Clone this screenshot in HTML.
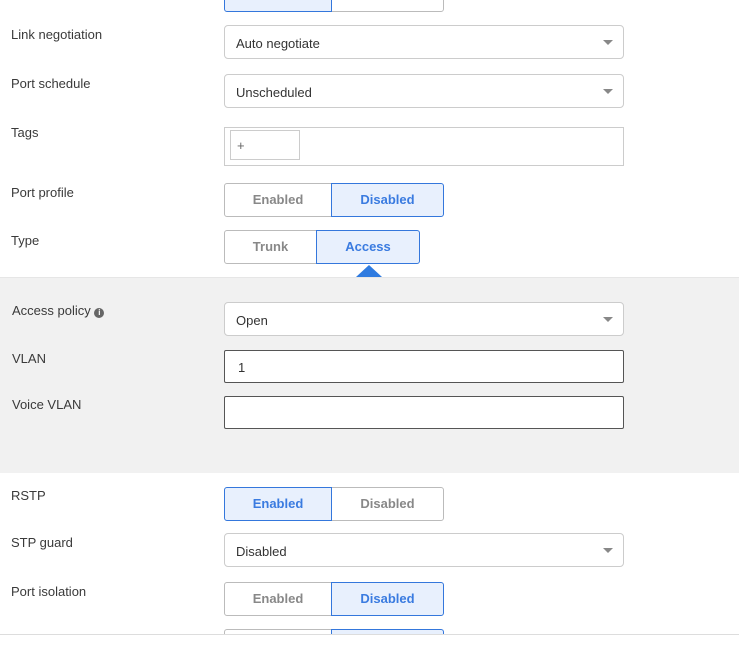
<!DOCTYPE html>
<html><head><style>
*{box-sizing:border-box;margin:0;padding:0}
html,body{width:739px;height:657px;overflow:hidden}
body{position:relative;background:#fff;font-family:"Liberation Sans",sans-serif;font-size:13px;color:#333}
.a{position:absolute}
.lbl{position:absolute;left:11px;font-size:13px;color:#3a3a3a}
.sel{position:absolute;left:224px;width:400px;height:34px;border:1px solid #ccc;border-radius:4px;background:#fff;padding:10px 0 0 11px;color:#333}
.sel:after{content:"";position:absolute;right:10px;top:14px;border-left:5px solid transparent;border-right:5px solid transparent;border-top:5px solid #888}
.inp{position:absolute;left:224px;width:400px;height:33px;border:1px solid #555;border-radius:2px;background:#fff;padding:9px 0 0 13px}
.btn{position:absolute;height:34px;border:1px solid #bbb;background:#fff;color:#888;font-weight:bold;text-align:center;line-height:32px;font-size:13px}
.on{background:#e8f0fd;border-color:#3477dc;color:#3a7be0;z-index:2}
.l{border-radius:3px 0 0 3px}.r{border-radius:0 3px 3px 0}
</style></head><body>
<div class="btn on l" style="left:224px;top:-22px;width:108px;"></div>
<div class="btn r" style="left:331px;top:-22px;width:113px;"></div>

<div class="lbl" style="top:27px">Link negotiation</div>
<div class="sel" style="top:25px">Auto negotiate</div>
<div class="lbl" style="top:76px">Port schedule</div>
<div class="sel" style="top:74px">Unscheduled</div>
<div class="lbl" style="top:125px">Tags</div>
<div class="a" style="left:224px;top:127px;width:400px;height:39px;border:1px solid #ccc"></div>
<div class="a" style="left:230px;top:130px;width:70px;height:30px;border:1px solid #ccc;padding:7px 0 0 6px;color:#666">+</div>

<div class="lbl" style="top:185px">Port profile</div>
<div class="btn l" style="left:224px;top:183px;width:108px;">Enabled</div>
<div class="btn on r" style="left:331px;top:183px;width:113px;">Disabled</div>
<div class="lbl" style="top:233px">Type</div>
<div class="btn l" style="left:224px;top:230px;width:93px;">Trunk</div>
<div class="btn on r" style="left:316px;top:230px;width:104px;">Access</div>

<div class="a" style="left:0;top:277px;width:739px;height:196px;background:#f1f1f1;border-top:1px solid #e6e6e6"></div>
<div class="a" style="left:356px;top:265px;border-left:13px solid transparent;border-right:13px solid transparent;border-bottom:12px solid #2f7be0"></div>
<div class="lbl" style="left:12px;top:303px">Access policy <span style="display:inline-block;width:10px;height:10px;border-radius:50%;background:#666;color:#fff;font-size:8px;line-height:10px;text-align:center;font-weight:bold;vertical-align:0">i</span></div>
<div class="sel" style="top:302px">Open</div>
<div class="lbl" style="left:12px;top:351px">VLAN</div>
<div class="inp" style="top:350px">1</div>
<div class="lbl" style="left:12px;top:397px">Voice VLAN</div>
<div class="inp" style="top:396px"></div>

<div class="lbl" style="top:488px">RSTP</div>
<div class="btn on l" style="left:224px;top:487px;width:108px;">Enabled</div>
<div class="btn r" style="left:331px;top:487px;width:113px;">Disabled</div>
<div class="lbl" style="top:535px">STP guard</div>
<div class="sel" style="top:533px">Disabled</div>
<div class="lbl" style="top:584px">Port isolation</div>
<div class="btn l" style="left:224px;top:582px;width:108px;">Enabled</div>
<div class="btn on r" style="left:331px;top:582px;width:113px;">Disabled</div>
<div class="a" style="left:224px;top:629px;width:108px;height:5px;border:1px solid #bbb;border-bottom:none;border-radius:3px 0 0 0"></div>
<div class="a" style="left:331px;top:629px;width:113px;height:5px;border:1px solid #3477dc;border-bottom:none;background:#e8f0fd;border-radius:0 3px 0 0"></div>
<div class="a" style="left:0;top:634px;width:739px;height:23px;background:#fff;border-top:1px solid #ddd"></div>
</body></html>
